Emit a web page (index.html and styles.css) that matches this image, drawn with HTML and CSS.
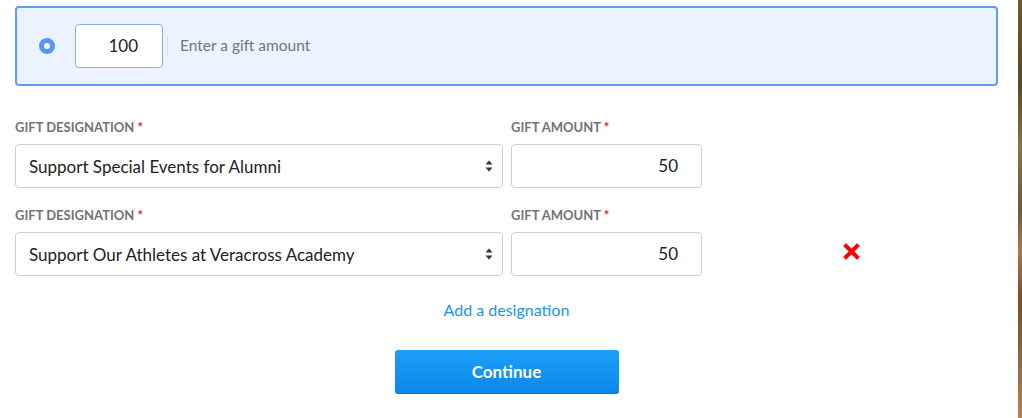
FILE: index.html
```html
<!DOCTYPE html>
<html>
<head>
<meta charset="utf-8">
<link rel="stylesheet" href="styles.css">
</head>
<body>
<div class="page">
  <main class="form">
    <div class="amount-box">
      <span class="radio"></span>
      <div class="amount-input">100</div>
      <span class="divider"></span>
      <span class="hint">Enter a gift amount</span>
    </div>

    <div class="rows">
      <div class="row">
        <label class="label">Gift Designation <span class="req">*</span></label>
        <label class="label">Gift Amount <span class="req">*</span></label>
        <span></span>
        <div class="select"><span>Support Special Events for Alumni</span>
          <svg class="caret" width="8" height="12" viewBox="0 0 8 12"><path d="M4 0.5 L7.5 4.5 H0.5 Z M4 11.5 L7.5 7.5 H0.5 Z" fill="#333"/></svg>
        </div>
        <div class="input">50</div>
        <span></span>
      </div>
      <div class="row">
        <label class="label">Gift Designation <span class="req">*</span></label>
        <label class="label">Gift Amount <span class="req">*</span></label>
        <span></span>
        <div class="select"><span>Support Our Athletes at Veracross Academy</span>
          <svg class="caret" width="8" height="12" viewBox="0 0 8 12"><path d="M4 0.5 L7.5 4.5 H0.5 Z M4 11.5 L7.5 7.5 H0.5 Z" fill="#333"/></svg>
        </div>
        <div class="input">50</div>
        <span class="remove">
          <svg width="17" height="17" viewBox="0 0 17 17"><path d="M3 3 L14 14 M14 3 L3 14" stroke="#ff0000" stroke-width="4" stroke-linecap="square"/></svg>
        </span>
      </div>
    </div>

    <div class="add"><a href="#">Add a designation</a></div>
    <div class="actions"><button class="continue">Continue</button></div>
  </main>
  <div class="photo"></div>
</div>
</body>
</html>
```

FILE: styles.css
```css
* { box-sizing: border-box; }
html, body { margin: 0; padding: 0; background: #fff; }
body {
  font-family: Lato, "Source Sans Pro", "Liberation Sans", sans-serif;
  color: #222;
  width: 1022px;
  height: 418px;
  overflow: hidden;
}
.page {
  display: flex;
  height: 418px;
}
.form {
  width: 983px;
  margin-left: 15px;
  padding-top: 6px;
}
.amount-box {
  display: flex;
  align-items: center;
  height: 80px;
  padding: 16px 22px;
  border: 2px solid #5f9cf8;
  border-radius: 4px;
  background: #ebf3fe;
}
.radio {
  width: 16px;
  height: 16px;
  border-radius: 50%;
  background: #5b95f4;
  position: relative;
  flex: none;
}
.radio::after {
  content: "";
  position: absolute;
  left: 5px;
  top: 5px;
  width: 6px;
  height: 6px;
  border-radius: 50%;
  background: #fff;
}
.amount-input {
  margin-left: 20px;
  width: 88px;
  height: 44px;
  border: 1px solid #7fb0f7;
  border-radius: 4px;
  background: #fff;
  font-size: 17px;
  line-height: 42px;
  text-align: right;
  padding-right: 24px;
  color: #222;
}
.divider {
  width: 1px;
  height: 20px;
  background: #d9dde3;
  margin-left: 4px;
}
.hint {
  margin-left: 12px;
  font-size: 15.5px;
  line-height: 18px;
  padding-bottom: 2px;
  color: #757575;
}
.rows {
  margin-top: 31px;
}
.row {
  display: grid;
  grid-template-columns: 488px 191px 1fr;
  column-gap: 8px;
  row-gap: 7px;
  margin-bottom: 17px;
}
.row:last-child { margin-bottom: 0; }
.label {
  font-size: 13px;
  font-weight: 700;
  text-transform: uppercase;
  color: #737373;
  line-height: 20px;
}
.req { color: #e0201c; }
.select, .input {
  height: 44px;
  border: 1px solid #cfcfcf;
  border-radius: 4px;
  background: #fff;
  font-size: 17px;
  color: #222;
}
.select {
  display: flex;
  align-items: center;
  justify-content: space-between;
  padding: 0 9px 0 13px;
}
.input {
  line-height: 42px;
  text-align: right;
  padding-right: 23px;
}
.remove {
  display: flex;
  align-items: center;
  padding-left: 133px;
  padding-bottom: 6px;
}
.add {
  margin-top: 24px;
  text-align: center;
  line-height: 20px;
}
.add a {
  font-size: 16px;
  color: #1a95ee;
  text-decoration: none;
}
.actions {
  display: flex;
  justify-content: center;
  margin-top: 30px;
}
.continue {
  width: 224px;
  height: 44px;
  border: none;
  border-bottom: 1px solid #0a72c9;
  border-radius: 3px;
  background: linear-gradient(#1da0f8, #0a88ec);
  color: #fff;
  font-family: inherit;
  font-size: 17px;
  font-weight: 700;
}
.photo {
  margin-left: auto;
  width: 4px;
  height: 418px;
  background: linear-gradient(#6f5a2c 0%, #5a4a22 20%, #8a7440 35%, #6e5a3a 50%, #b0773e 60%, #7a4e2a 72%, #8a6a3a 85%, #c08040 100%);
}
```
